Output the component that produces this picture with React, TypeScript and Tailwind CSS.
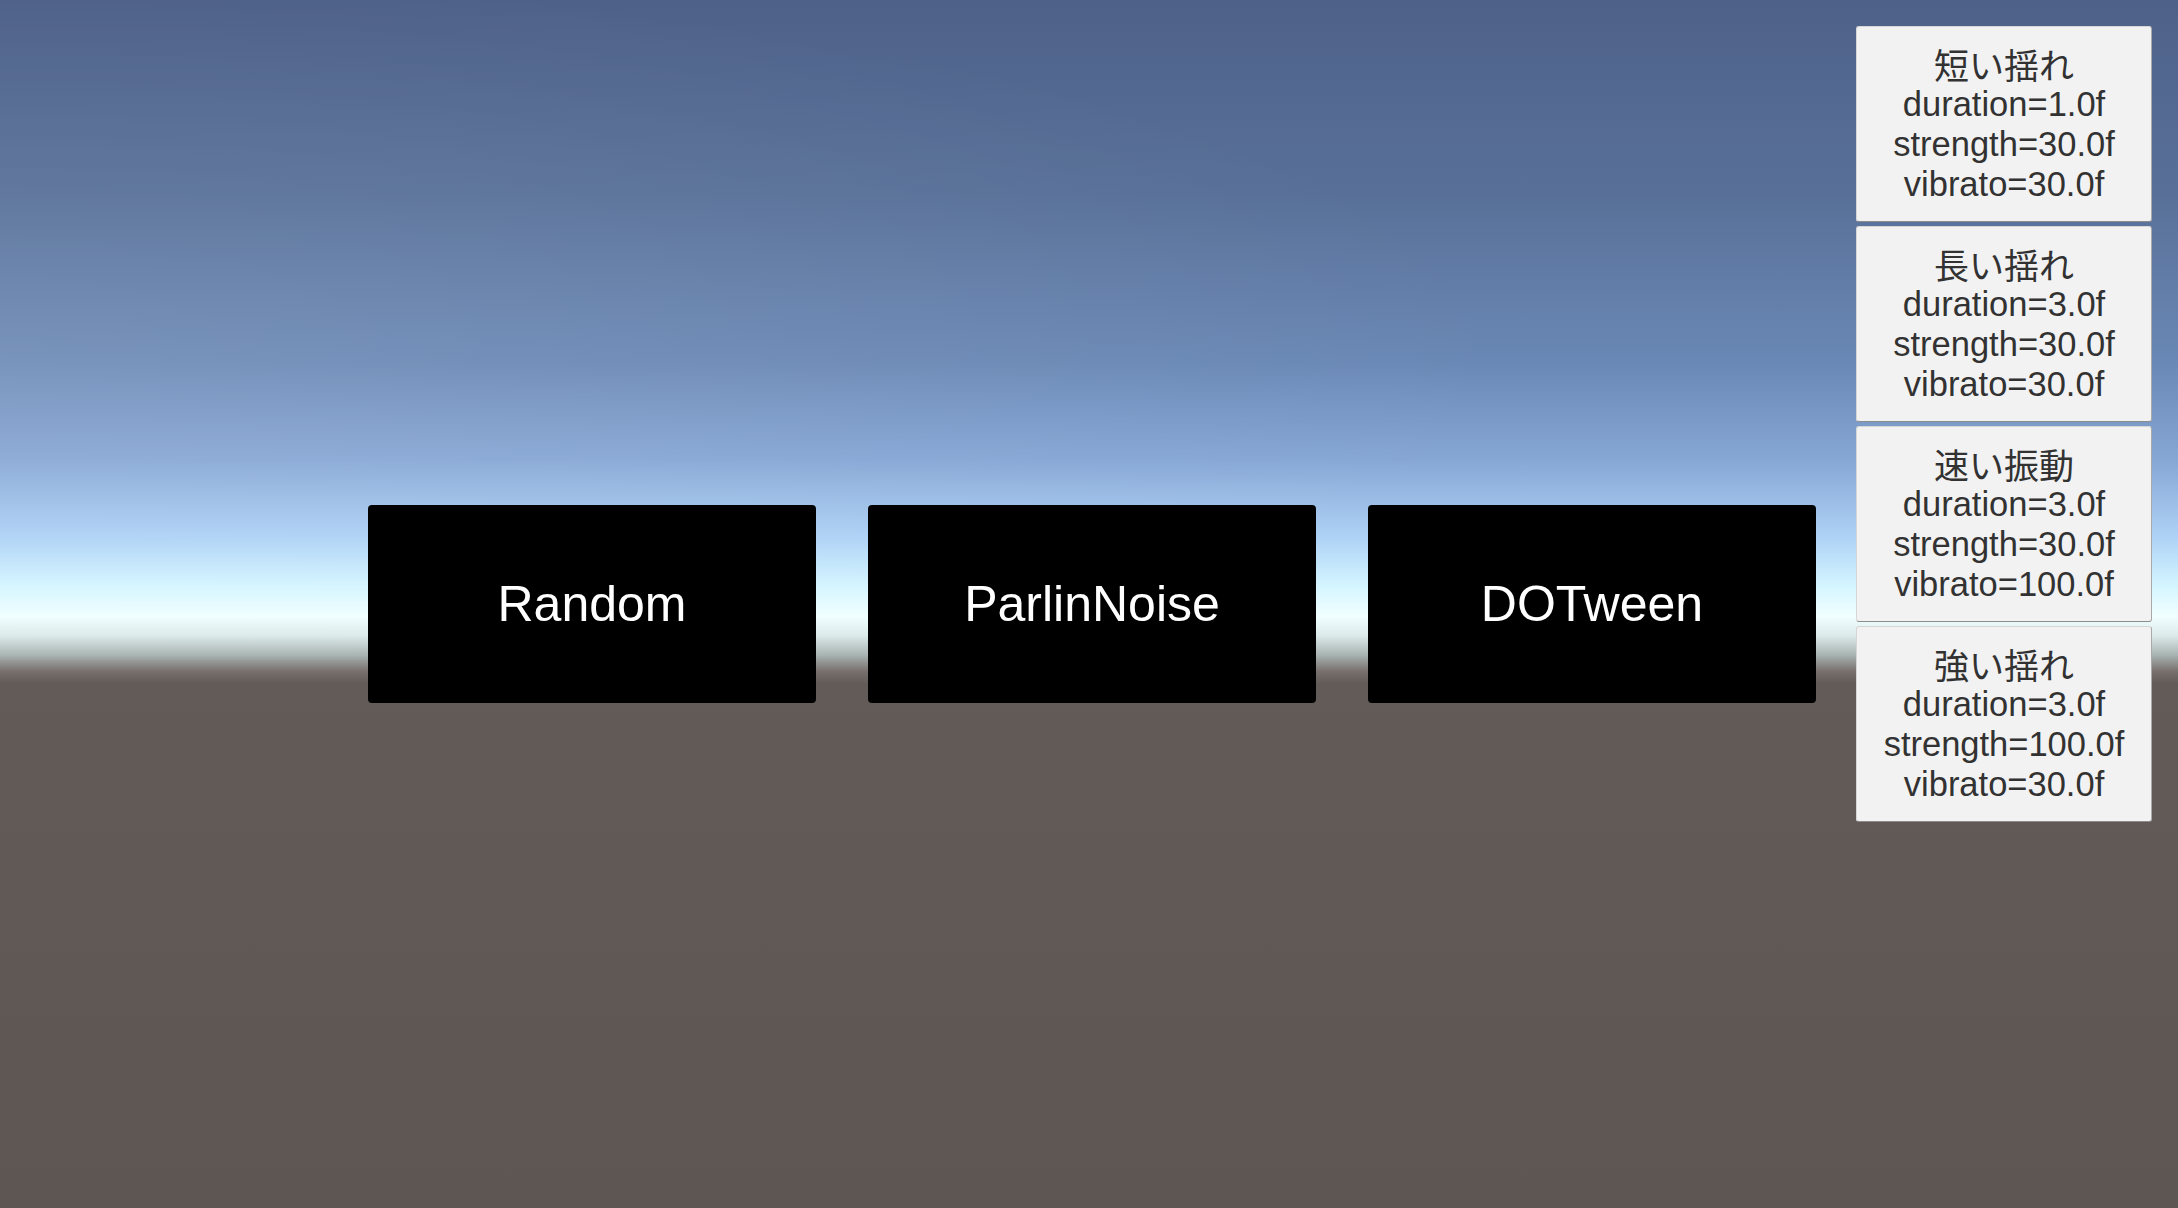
import React from 'react';

const shakes = [
  { label: '短い揺れ', duration: '1.0f', strength: '30.0f', vibrato: '30.0f' },
  { label: '長い揺れ', duration: '3.0f', strength: '30.0f', vibrato: '30.0f' },
  { label: '速い振動', duration: '3.0f', strength: '30.0f', vibrato: '100.0f' },
  { label: '強い揺れ', duration: '3.0f', strength: '100.0f', vibrato: '30.0f' },
];

const modes = ['Random', 'ParlinNoise', 'DOTween'];

export default function App() {
  return (
    <div className="relative w-full h-screen overflow-hidden bg-[linear-gradient(to_bottom,#4e6189_0%,#587098_16%,#6a88b5_30%,#86a6d4_38%,#aed2f6_44.5%,#d4f5ff_48.5%,#f0ffff_51%,#dceaea_52.6%,#a9b4b3_54.2%,#776f6c_55.6%,#625b58_56.6%,#5f5854_80%,#5d5652_100%)] font-['Liberation_Sans',Arial,sans-serif]">
      {/* faint light bloom on the left of the sky */}
      <div className="pointer-events-none absolute inset-x-0 top-0 h-[660px] bg-[radial-gradient(ellipse_70%_60%_at_0%_55%,rgba(255,255,255,0.10),rgba(255,255,255,0)_100%)]" />

      {/* main buttons */}
      <div className="relative h-full flex items-center justify-center pl-[6px]">
        <div className="flex gap-[52px]">
          {modes.map((m) => (
            <button
              key={m}
              className="w-[448px] h-[198px] bg-black rounded-[4px] flex items-center justify-center text-white text-[50px] leading-none"
            >
              {m}
            </button>
          ))}
        </div>
      </div>

      {/* shake presets */}
      <div className="absolute top-[26px] right-[26px] flex flex-col gap-[4px]">
        {shakes.map((s) => (
          <button
            key={s.label}
            className="w-[296px] h-[196px] bg-[#f2f2f2] rounded-[3px] border border-[#d6d6d6] border-b-[#8c8c8c] border-r-[#a8a8a8] flex flex-col items-center justify-center text-[#323232] text-[34.5px] leading-[40px]"
          >
            <span className="font-['Noto_Sans_CJK_JP',sans-serif] text-[35px] leading-[40px]">{s.label}</span>
            <span>duration={s.duration}</span>
            <span>strength={s.strength}</span>
            <span>vibrato={s.vibrato}</span>
          </button>
        ))}
      </div>
    </div>
  );
}
